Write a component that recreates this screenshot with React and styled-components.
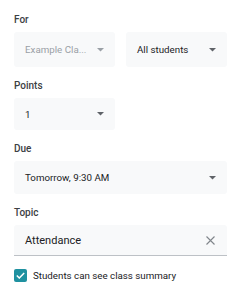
import React from "react";
import styled, { createGlobalStyle } from "styled-components";

const GlobalStyle = createGlobalStyle`
  body {
    margin: 0;
    background: #ffffff;
    font-family: Roboto, "Liberation Sans", sans-serif;
  }
`;

const Form = styled.div`
  display: flex;
  flex-direction: column;
  padding: 14px 13px 0 14px;
  width: 240px;
  box-sizing: border-box;
`;

const Field = styled.div`
  margin-bottom: ${(p) => p.$gap || 13}px;
`;

const Label = styled.div`
  font-size: 10px;
  font-weight: 500;
  line-height: 12px;
  color: #3c4043;
  margin-bottom: 6px;
`;

const Row = styled.div`
  display: grid;
  grid-template-columns: 1fr 1fr;
  gap: 11px;
`;

const Select = styled.div`
  display: flex;
  align-items: center;
  justify-content: space-between;
  height: ${(p) => p.$height || 32}px;
  width: ${(p) => (p.$width ? `${p.$width}px` : "auto")};
  padding: 0 11px;
  box-sizing: border-box;
  background: #f8f9fa;
  border-radius: 3px;
`;

const Value = styled.span`
  font-size: 9.75px;
  color: ${(p) => (p.$muted ? "#9aa0a6" : "#202124")};
  white-space: nowrap;
`;

const Caret = ({ color = "#5f6368" }) => (
  <svg width="7" height="4" viewBox="0 0 7 4">
    <path d="M0 0h7L3.5 3.6z" fill={color} />
  </svg>
);

const TextField = styled.div`
  display: flex;
  align-items: center;
  justify-content: space-between;
  height: 31px;
  padding: 0 12px 0 11px;
  box-sizing: border-box;
  background: #f8f9fa;
  border-radius: 3px 3px 0 0;
  border-bottom: 1px solid #bdc1c6;
`;

const InputText = styled.span`
  font-size: 11px;
  color: #202124;
`;

const ClearIcon = () => (
  <svg width="9" height="9" viewBox="0 0 9 9">
    <path d="M0.5 0.5L8.5 8.5M8.5 0.5L0.5 8.5" stroke="#80868b" strokeWidth="1.1" />
  </svg>
);

const CheckRow = styled.label`
  display: flex;
  align-items: center;
  gap: 6px;
`;

const Box = styled.span`
  display: flex;
  align-items: center;
  justify-content: center;
  width: 13px;
  height: 13px;
  border-radius: 2px;
  background: #1f91a0;
`;

const CheckText = styled.span`
  font-size: 9.75px;
  color: #202124;
`;

export default function App() {
  return (
    <>
      <GlobalStyle />
      <Form>
        <Field>
          <Label>For</Label>
          <Row>
            <Select $height={35}>
              <Value $muted>Example Cla...</Value>
              <Caret color="#9aa0a6" />
            </Select>
            <Select $height={35}>
              <Value>All students</Value>
              <Caret />
            </Select>
          </Row>
        </Field>
        <Field>
          <Label>Points</Label>
          <Select $width={101}>
            <Value>1</Value>
            <Caret />
          </Select>
        </Field>
        <Field>
          <Label>Due</Label>
          <Select $height={33}>
            <Value>Tomorrow, 9:30 AM</Value>
            <Caret />
          </Select>
        </Field>
        <Field $gap={13}>
          <Label>Topic</Label>
          <TextField>
            <InputText>Attendance</InputText>
            <ClearIcon />
          </TextField>
        </Field>
        <CheckRow>
          <Box>
            <svg width="9" height="7" viewBox="0 0 9 7">
              <path d="M0.8 3.5L3.3 6L8.2 1" stroke="#fff" strokeWidth="1.5" fill="none" />
            </svg>
          </Box>
          <CheckText>Students can see class summary</CheckText>
        </CheckRow>
      </Form>
    </>
  );
}
